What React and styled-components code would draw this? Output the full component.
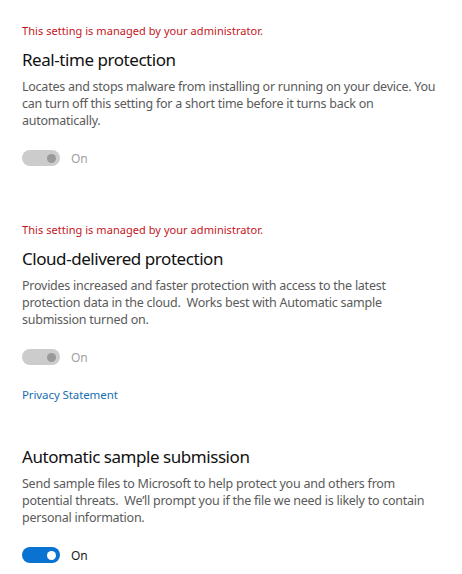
import styled, { createGlobalStyle } from 'styled-components';

const Global = createGlobalStyle`
  body {
    margin: 0;
    background: #ffffff;
    font-family: "Noto Sans", "Open Sans", sans-serif;
  }
`;

const Page = styled.div`
  padding: 23px 22px 0 22px;
  display: flex;
  flex-direction: column;
`;

const Section = styled.section`
  display: flex;
  flex-direction: column;
  margin-top: ${(p) => p.top || 0}px;
`;

const Managed = styled.div`
  font-size: 11px;
  line-height: 16px;
  letter-spacing: 0.05px;
  color: #c4151c;
  margin-bottom: 9px;
`;

const Title = styled.h2`
  margin: 0;
  font-size: 17px;
  font-weight: 400;
  line-height: 24px;
  letter-spacing: -0.45px;
  color: #111;
`;

const Desc = styled.p`
  margin: 6px 0 0 0;
  font-size: 12.5px;
  line-height: 17px;
  letter-spacing: -0.25px;
  color: #5a5a5a;
`;

const ToggleRow = styled.div`
  display: flex;
  align-items: center;
  gap: 11px;
  height: 20px;
  margin-top: 19px;
`;

const Track = styled.div`
  width: 38px;
  height: 16px;
  border-radius: 8px;
  background: ${(p) => (p.on ? '#0a73d1' : '#cccccc')};
  display: flex;
  align-items: center;
  justify-content: flex-end;
  padding-right: 4px;
  box-sizing: border-box;
`;

const Knob = styled.div`
  width: 9px;
  height: 9px;
  border-radius: 50%;
  background: ${(p) => (p.on ? '#ffffff' : '#9a9a9a')};
`;

const ToggleLabel = styled.span`
  font-size: 12px;
  color: ${(p) => (p.on ? '#1a1a1a' : '#a0a0a0')};
`;

const Link = styled.a`
  margin-top: 20px;
  font-size: 11.5px;
  line-height: 16px;
  letter-spacing: -0.1px;
  color: #1a6fb0;
  text-decoration: none;
`;

function Toggle({ on }) {
  return (
    <ToggleRow>
      <Track on={on ? 1 : 0}>
        <Knob on={on ? 1 : 0} />
      </Track>
      <ToggleLabel on={on ? 1 : 0}>On</ToggleLabel>
    </ToggleRow>
  );
}

function App() {
  return (
    <Page>
      <Global />
      <Section>
        <Managed>This setting is managed by your administrator.</Managed>
        <Title>Real-time protection</Title>
        <Desc>
          Locates and stops malware from installing or running on your device. You can turn off this setting for a short time before it turns back on automatically.
        </Desc>
        <Toggle />
      </Section>
      <Section top={54}>
        <Managed>This setting is managed by your administrator.</Managed>
        <Title>Cloud-delivered protection</Title>
        <Desc>
          Provides increased and faster protection with access to the latest protection data in the cloud.&nbsp; Works best with Automatic sample submission turned on.
        </Desc>
        <Toggle />
        <Link href="#">Privacy Statement</Link>
      </Section>
      <Section top={42}>
        <Title>Automatic sample submission</Title>
        <Desc>
          Send sample files to Microsoft to help protect you and others from potential threats.&nbsp; We’ll prompt you if the file we need is likely to contain personal information.
        </Desc>
        <Toggle on />
      </Section>
    </Page>
  );
}

export default App;
